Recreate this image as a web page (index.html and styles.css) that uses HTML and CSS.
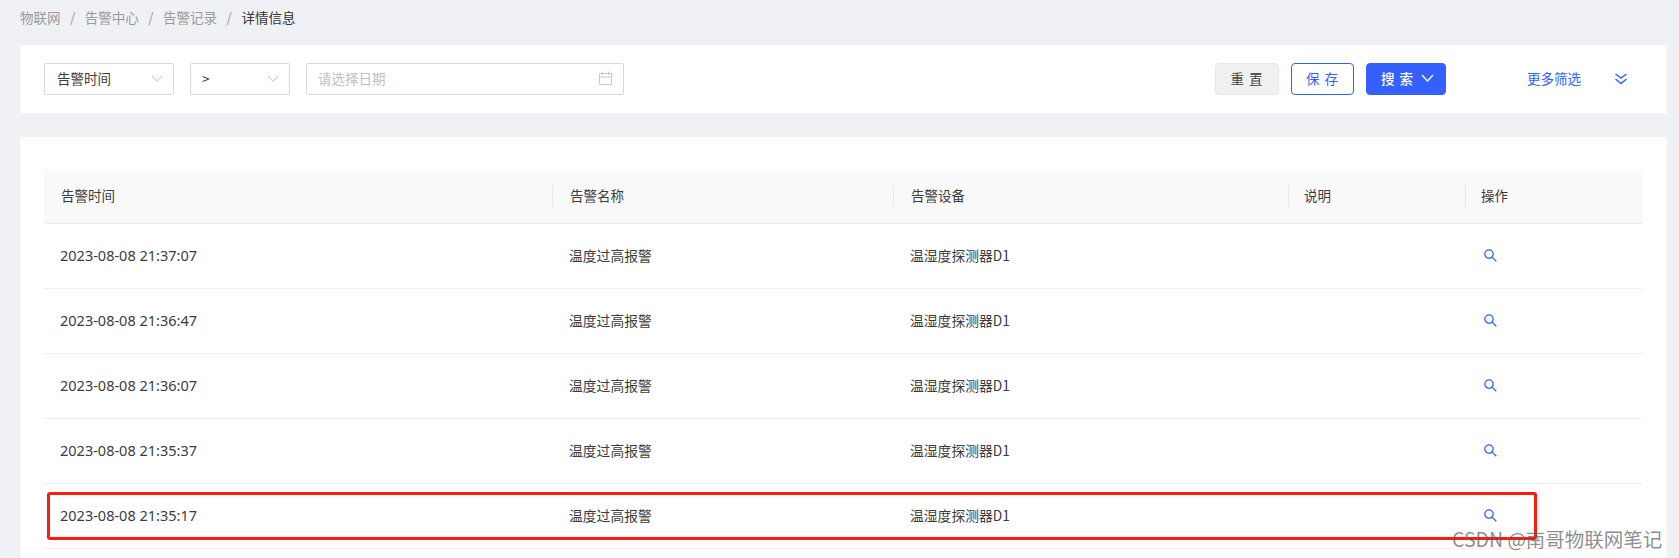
FILE: index.html
```html
<!DOCTYPE html>
<html lang="zh">
<head>
<meta charset="utf-8">
<title>详情信息</title>
<link rel="stylesheet" href="styles.css">
</head>
<body>
<nav class="crumbs">
  <span>物联网</span><i>/</i><span>告警中心</span><i>/</i><span>告警记录</span><i>/</i><b>详情信息</b>
</nav>
<section class="panel filters">
  <div class="select s1"><span>告警时间</span><svg class="chev" viewBox="0 0 12 7"><path d="M1 1l5 5.4L11 1"/></svg></div>
  <div class="select s2"><span>&gt;</span><svg class="chev" viewBox="0 0 12 7"><path d="M1 1l5 5.4L11 1"/></svg></div>
  <div class="select date"><span class="ph">请选择日期</span><svg class="cal" viewBox="0 0 13 14"><path d="M.5 2.5h12v11H.5zM.5 6h12M3.5.5v3.5M9.5.5v3.5"/></svg></div>
  <div class="spacer"></div>
  <button class="btn reset">重 置</button>
  <button class="btn save">保 存</button>
  <button class="btn search">搜 索<svg class="chev-w" viewBox="0 0 13 8"><path d="M1 1l5.5 6L12 1"/></svg></button>
  <a class="more">更多筛选</a>
  <svg class="dbl" viewBox="0 0 14 12"><path d="M1.5 1l5.5 4 5.5-4M1.5 6l5.5 4.5L12.5 6"/></svg>
</section>
<section class="panel list">
  <div class="table">
    <div class="row head">
      <div class="cell c1">告警时间</div><div class="cell c2">告警名称</div><div class="cell c3">告警设备</div><div class="cell c4">说明</div><div class="cell c5">操作</div>
    </div>
    <div class="row"><div class="cell c1 time">2023-08-08 21:37:07</div><div class="cell c2">温度过高报警</div><div class="cell c3">温湿度探测器D1</div><div class="cell c4"></div><div class="cell c5"><svg class="mag" viewBox="0 0 13 13"><path d="M8.4 8.4L12.3 12.3M9.2 5.1a4.2 4.2 0 1 1-8.4 0 4.2 4.2 0 0 1 8.4 0z"/></svg></div></div>
    <div class="row"><div class="cell c1 time">2023-08-08 21:36:47</div><div class="cell c2">温度过高报警</div><div class="cell c3">温湿度探测器D1</div><div class="cell c4"></div><div class="cell c5"><svg class="mag" viewBox="0 0 13 13"><path d="M8.4 8.4L12.3 12.3M9.2 5.1a4.2 4.2 0 1 1-8.4 0 4.2 4.2 0 0 1 8.4 0z"/></svg></div></div>
    <div class="row"><div class="cell c1 time">2023-08-08 21:36:07</div><div class="cell c2">温度过高报警</div><div class="cell c3">温湿度探测器D1</div><div class="cell c4"></div><div class="cell c5"><svg class="mag" viewBox="0 0 13 13"><path d="M8.4 8.4L12.3 12.3M9.2 5.1a4.2 4.2 0 1 1-8.4 0 4.2 4.2 0 0 1 8.4 0z"/></svg></div></div>
    <div class="row"><div class="cell c1 time">2023-08-08 21:35:37</div><div class="cell c2">温度过高报警</div><div class="cell c3">温湿度探测器D1</div><div class="cell c4"></div><div class="cell c5"><svg class="mag" viewBox="0 0 13 13"><path d="M8.4 8.4L12.3 12.3M9.2 5.1a4.2 4.2 0 1 1-8.4 0 4.2 4.2 0 0 1 8.4 0z"/></svg></div></div>
    <div class="row"><div class="cell c1 time">2023-08-08 21:35:17</div><div class="cell c2">温度过高报警</div><div class="cell c3">温湿度探测器D1</div><div class="cell c4"></div><div class="cell c5"><svg class="mag" viewBox="0 0 13 13"><path d="M8.4 8.4L12.3 12.3M9.2 5.1a4.2 4.2 0 1 1-8.4 0 4.2 4.2 0 0 1 8.4 0z"/></svg></div></div>
  </div>
</section>
<div class="redbox"></div>
<div class="mark">CSDN @南哥物联网笔记</div>
</body>
</html>
```

FILE: styles.css
```css
* { box-sizing: border-box; }
html, body { height: 558px; overflow: hidden; }
body {
  margin: 0;
  padding: 0 12px 0 20px;
  background: #f0f1f5;
  font-family: "Noto Sans CJK SC", "Noto Sans", sans-serif;
  font-size: 13.5px;
  color: #3c3c3c;
}
.crumbs {
  height: 45px;
  padding-bottom: 11px;
  display: flex;
  align-items: center;
  color: #9a9a9a;
}
.crumbs i { font-style: normal; margin: 0 9.5px; }
.crumbs b { font-weight: 400; color: #333; }
.panel { background: #fff; }
.filters {
  height: 68px;
  padding: 18px 0 18px 24px;
  display: flex;
  align-items: flex-start;
}
.select {
  height: 32px;
  border: 1px solid #d9d9d9;
  border-radius: 2px;
  display: flex;
  align-items: center;
  justify-content: space-between;
  padding: 0 10px 2px 12px;
  margin-right: 16px;
}
.s1 { width: 130px; }
.s2 { width: 100px; padding-left: 11px; }
.date { width: 318px; margin-right: 0; padding-left: 11px; padding-right: 11px; }
.ph { color: #bfbfbf; }
.chev { width: 12px; height: 7px; fill: none; stroke: #c4c4c4; stroke-width: 1; }
.cal { width: 13px; height: 14px; fill: none; stroke: #c8c8c8; stroke-width: 1; }
.spacer { flex: 1; }
.btn {
  height: 32px;
  border-radius: 4px;
  font: inherit;
  padding: 0 0 2px;
  margin-right: 12px;
  display: flex;
  align-items: center;
  justify-content: center;
  letter-spacing: 1px;
}
.reset { width: 64px; background: #f0f0f0; border: 1px solid #e6e6e6; color: #444; }
.save { width: 63px; background: #fff; border: 1px solid #3360ff; color: #3360ff; }
.search { width: 80px; padding-left: 3px; background: #3360ff; border: 1px solid #3360ff; color: #fff; font-weight: 500; margin-right: 0; }
.chev-w { width: 13px; height: 8px; margin-left: 7px; fill: none; stroke: #fff; stroke-width: 1.3; }
.more { margin-left: 81px; color: #3360ff; height: 32px; line-height: 30px; }
.dbl { width: 14px; height: 12px; margin: 10px 39px 0 33px; fill: none; stroke: #3360ff; stroke-width: 1.5; }
.list { margin-top: 24px; padding: 32px 24px 0; height: 430px; }
.table { width: 100%; }
.row {
  display: grid;
  grid-template-columns: 508px 341px 395px 177px 1fr;
  height: 65px;
  border-bottom: 1px solid #eeeeee;
  align-items: center;
  font-size: 13.8px;
}
.head { height: 55px; background: #f9f9fa; border-bottom: 1px solid #ececec; font-size: 13.5px; }
.cell { padding-left: 17px; padding-bottom: 3px; }
.time { padding-left: 16px; font-family: "Noto Sans", sans-serif; font-size: 14.5px; }
.head .cell { padding-left: 17px; height: 22px; line-height: 21px; padding-bottom: 0; }
.head .c4, .head .c5 { padding-left: 15px; }
.head .cell + .cell { border-left: 1px solid #e6e6e6; }
.mag { display: block; width: 13px; height: 13px; margin: 2px 0 0 2px; fill: none; stroke: #3360ff; stroke-width: 1.3; }
.redbox {
  position: absolute;
  left: 47px;
  top: 492px;
  width: 1490px;
  height: 48px;
  border: 3px solid #ff1a0e;
  border-radius: 3px;
}
.mark {
  position: absolute;
  left: 1452px;
  top: 526px;
  font-size: 19.5px;
  line-height: 26px;
  color: rgba(90, 90, 90, .7);
  white-space: nowrap;
}
```
